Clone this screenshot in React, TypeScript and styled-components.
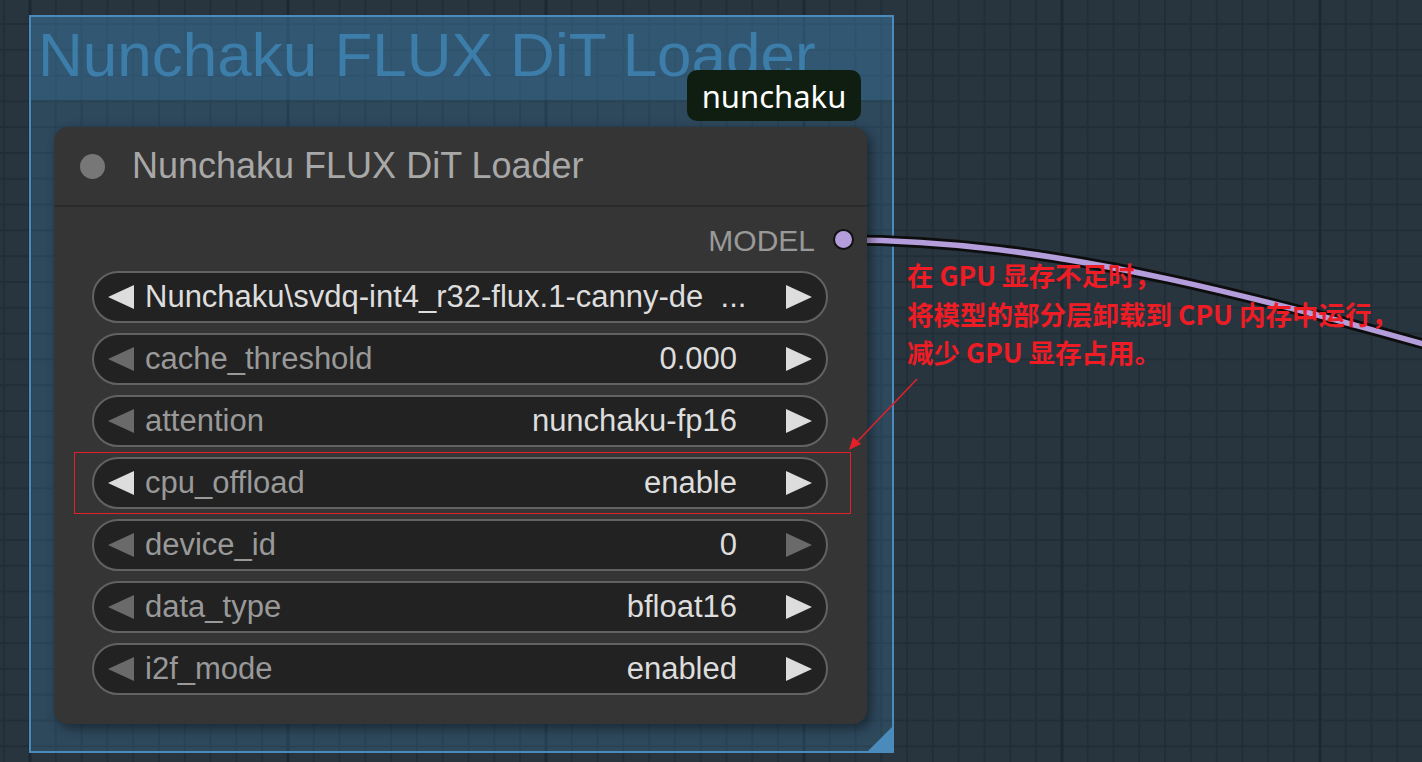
import React from "react";
import styled, { createGlobalStyle } from "styled-components";

const GlobalStyle = createGlobalStyle`
  html, body {
    margin: 0;
    padding: 0;
    background: #28353f;
    overflow: hidden;
  }
`;

const Canvas = styled.div`
  position: relative;
  width: 1422px;
  height: 762px;
  overflow: hidden;
  font-family: "Liberation Sans", Arial, sans-serif;
  background-color: #28353f;
  background-image:
    linear-gradient(to right, #1d2831 3px, transparent 3px),
    linear-gradient(to right, #222e37 2px, transparent 2px),
    linear-gradient(to bottom, #222e37 2px, transparent 2px);
  background-size: 258px 100%, 25.8px 100%, 100% 25.8px;
  background-position: 28.5px 0, 3.2px 0, 0 23px;
`;

const Group = styled.section`
  position: absolute;
  left: 29px;
  top: 15px;
  width: 865px;
  height: 738px;
  box-sizing: border-box;
  border: 2px solid #4a8bbb;
  background: rgba(63, 130, 180, 0.25);
`;

const GroupTitle = styled.div`
  height: 83px;
  box-sizing: border-box;
  padding: 7px 0 0 7px;
  background: rgba(63, 130, 180, 0.25);
  color: #3c7daa;
  font-size: 62px;
  line-height: 62px;
  white-space: nowrap;
  overflow: hidden;
`;

const ResizeCorner = styled.svg`
  position: absolute;
  right: 0;
  bottom: 0;
  display: block;
`;

const Wire = styled.svg`
  position: absolute;
  left: 0;
  top: 0;
  pointer-events: none;
`;

const Node = styled.div`
  position: absolute;
  left: 54px;
  top: 127px;
  width: 813px;
  background: #353535;
  border-radius: 14px;
  box-shadow: 4px 4px 12px rgba(0, 0, 0, 0.45);
`;

const NodeHeader = styled.header`
  height: 78px;
  display: flex;
  align-items: center;
  gap: 27px;
  padding-left: 26px;
  border-bottom: 2px solid #2b2b2b;
`;

const StatusDot = styled.span`
  flex: none;
  width: 25px;
  height: 25px;
  border-radius: 50%;
  background: #777;
`;

const NodeTitle = styled.span`
  font-size: 36px;
  color: #a8a8a8;
  white-space: nowrap;
`;

const OutputRow = styled.div`
  height: 64px;
  box-sizing: border-box;
  padding: 3px 13px 0 0;
  display: flex;
  justify-content: flex-end;
  align-items: center;
  gap: 18px;
`;

const SlotLabel = styled.span`
  font-size: 30px;
  color: #999;
`;

const SlotDot = styled.span`
  width: 17px;
  height: 17px;
  margin-top: -3px;
  border-radius: 50%;
  background: #b39ddb;
  border: 2px solid #111;
`;

const WidgetList = styled.div`
  display: flex;
  flex-direction: column;
  gap: 10px;
  padding: 0 39px 29px 38px;
`;

const Widget = styled.div`
  height: 52px;
  box-sizing: border-box;
  border: 2px solid #626262;
  border-radius: 26px;
  background: #222;
  display: flex;
  align-items: center;
  padding: 0 14px;
  font-size: 31px;
  white-space: pre;
`;

const WidgetLabel = styled.span<{ $bright?: boolean }>`
  flex: 1;
  min-width: 0;
  overflow: hidden;
  margin-left: 11px;
  color: ${(p) => (p.$bright ? "#ddd" : "#999")};
`;

const WidgetValue = styled.span`
  margin-right: 49px;
  color: #ddd;
`;

const Arrow = styled.svg<{ $on: boolean }>`
  flex: none;
  display: block;
  fill: ${(p) => (p.$on ? "#dddddd" : "#6a6a6a")};
`;

const Badge = styled.div`
  position: absolute;
  left: 687px;
  top: 70px;
  width: 174px;
  height: 51px;
  border-radius: 10px;
  background: #0f1e10;
  color: #fff;
  font-family: "Noto Sans", sans-serif;
  font-size: 31px;
  display: flex;
  align-items: center;
  justify-content: center;
`;

const Highlight = styled.div`
  position: absolute;
  left: 74px;
  top: 452px;
  width: 777px;
  height: 62px;
  box-sizing: border-box;
  border: 1.5px solid #e3202a;
`;

const Callout = styled.svg`
  position: absolute;
  left: 840px;
  top: 370px;
  pointer-events: none;
`;

const Note = styled.div`
  position: absolute;
  left: 907px;
  top: 256px;
  color: #ee1c25;
  font-family: "Noto Sans CJK SC", "Noto Sans", sans-serif;
  font-weight: 700;
  font-size: 26.5px;
  line-height: 38.5px;
  white-space: nowrap;
`;

type Row = { label: string; value?: string; left: boolean; right: boolean; bright?: boolean };

const rows: Row[] = [
  { label: "Nunchaku\\svdq-int4_r32-flux.1-canny-de  ...", left: true, right: true, bright: true },
  { label: "cache_threshold", value: "0.000", left: false, right: true },
  { label: "attention", value: "nunchaku-fp16", left: false, right: true },
  { label: "cpu_offload", value: "enable", left: true, right: true },
  { label: "device_id", value: "0", left: false, right: false },
  { label: "data_type", value: "bfloat16", left: false, right: true },
  { label: "i2f_mode", value: "enabled", left: false, right: true },
];

const LeftArrow = ({ on }: { on: boolean }) => (
  <Arrow $on={on} width="26" height="24" viewBox="0 0 26 24">
    <polygon points="0,12 26,0 26,24" />
  </Arrow>
);

const RightArrow = ({ on }: { on: boolean }) => (
  <Arrow $on={on} width="26" height="24" viewBox="0 0 26 24">
    <polygon points="0,0 26,12 0,24" />
  </Arrow>
);

const wirePath = "M 843 240 C 1050 240, 1250 292, 1600 395";

export default function App() {
  return (
    <>
      <GlobalStyle />
      <Canvas>
        <Group>
          <GroupTitle>Nunchaku FLUX DiT Loader</GroupTitle>
          <ResizeCorner width="24" height="24" viewBox="0 0 24 24">
            <polygon points="0,24 24,24 24,0" fill="#4a8bbb" />
          </ResizeCorner>
        </Group>

        <Wire width="1422" height="762" viewBox="0 0 1422 762">
          <path d={wirePath} fill="none" stroke="#0d0d0d" strokeWidth="11" />
          <path d={wirePath} fill="none" stroke="#b39ddb" strokeWidth="5.5" />
        </Wire>

        <Node>
          <NodeHeader>
            <StatusDot />
            <NodeTitle>Nunchaku FLUX DiT Loader</NodeTitle>
          </NodeHeader>
          <OutputRow>
            <SlotLabel>MODEL</SlotLabel>
            <SlotDot />
          </OutputRow>
          <WidgetList>
            {rows.map((r) => (
              <Widget key={r.label}>
                <LeftArrow on={r.left} />
                <WidgetLabel $bright={r.bright}>{r.label}</WidgetLabel>
                {r.value !== undefined && <WidgetValue>{r.value}</WidgetValue>}
                <RightArrow on={r.right} />
              </Widget>
            ))}
          </WidgetList>
        </Node>

        <Badge>nunchaku</Badge>

        <Highlight />
        <Callout width="90" height="90" viewBox="0 0 90 90">
          <line x1="77" y1="9" x2="14" y2="75" stroke="#e3202a" strokeWidth="1.5" />
          <polygon points="9,80 13,67 21,74" fill="#e3202a" />
        </Callout>
        <Note>
          <div>在 GPU 显存不足时，</div>
          <div>将模型的部分层卸载到 CPU 内存中运行，</div>
          <div>减少 GPU 显存占用。</div>
        </Note>
      </Canvas>
    </>
  );
}
